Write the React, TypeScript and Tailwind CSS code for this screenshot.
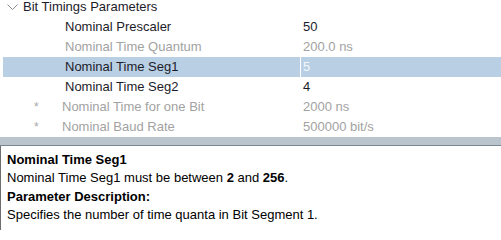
import React from "react"

type Row = {
  label: string
  value: string
  dim?: boolean
  star?: boolean
  selected?: boolean
}

const rows: Row[] = [
  { label: "Nominal Prescaler", value: "50" },
  { label: "Nominal Time Quantum", value: "200.0 ns", dim: true },
  { label: "Nominal Time Seg1", value: "5", selected: true },
  { label: "Nominal Time Seg2", value: "4" },
  { label: "Nominal Time for one Bit", value: "2000 ns", dim: true, star: true },
  { label: "Nominal Baud Rate", value: "500000 bit/s", dim: true, star: true },
]

function Chevron() {
  return (
    <svg width="11" height="7" viewBox="0 0 11 7" className="ml-[7px] mr-[5px]">
      <polyline points="0.5,0.5 5.5,5.5 10.5,0.5" fill="none" stroke="#8a8a8a" strokeWidth="1" />
    </svg>
  )
}

function TreeRow({ row }: { row: Row }) {
  const text = row.dim ? "text-[#a2a2a2]" : "text-[#1c1c2a]"
  return (
    <div className="flex h-[20px] pl-[3px]">
      <div className={`flex w-[297px] items-center ${row.selected ? "bg-[#b9cfe4]" : ""}`}>
        {row.star ? (
          <>
            <span className="w-[59px] pl-[31px] text-[12px] text-[#a8a8a8]">*</span>
            <span className={text}>{row.label}</span>
          </>
        ) : (
          <span className={`pl-[62px] ${text}`}>{row.label}</span>
        )}
      </div>
      <div className={`w-px ${row.selected ? "bg-white" : ""}`} />
      <div
        className={`flex flex-1 items-center pl-[2px] ${
          row.selected ? "bg-[#b9cfe4] text-[#f4f7fb]" : row.dim ? "text-[#a2a2a2]" : "text-[#1c1c2a]"
        }`}
      >
        {row.value}
      </div>
    </div>
  )
}

export default function App() {
  return (
    <div className="flex h-[230px] w-[501px] flex-col overflow-hidden bg-white font-['Liberation_Sans',Arial,sans-serif] text-[13px]">
      <div className="flex h-[17px] items-center pb-[3px]">
        <Chevron />
        <span className="text-[#1c1c2a]">Bit Timings Parameters</span>
      </div>
      {rows.map((r) => (
        <TreeRow key={r.label} row={r} />
      ))}
      <div className="h-[9px] border-b border-[#7b868f] bg-[#bac4cc]" />
      <div className="flex flex-1 flex-col border-l border-[#6e6e6e] pl-[6px] pt-[5px] text-[13px] leading-[18.3px] text-black">
        <div className="font-bold">Nominal Time Seg1</div>
        <div>
          Nominal Time Seg1 must be between <b>2</b> and <b>256</b>.
        </div>
        <div className="font-bold">Parameter Description:</div>
        <div>Specifies the number of time quanta in Bit Segment 1.</div>
      </div>
    </div>
  )
}
